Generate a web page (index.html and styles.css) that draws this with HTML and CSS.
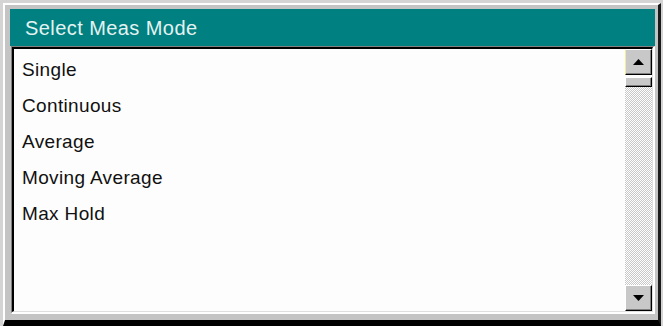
FILE: index.html
```html
<!DOCTYPE html>
<html>
<head>
<meta charset="utf-8">
<link rel="stylesheet" href="styles.css">
</head>
<body>
<div class="window">
  <div class="header">Select Meas Mode</div>
  <div class="sunken">
    <div class="list">
      <ul class="items">
        <li>Single</li>
        <li>Continuous</li>
        <li>Average</li>
        <li>Moving Average</li>
        <li>Max Hold</li>
      </ul>
      <div class="scroll">
        <div class="btn btn-up">
          <svg width="11" height="6" viewBox="0 0 11 6"><polygon points="5.5,0 11,6 0,6" fill="#000"/></svg>
        </div>
        <div class="thumb"></div>
        <div class="track"></div>
        <div class="btn btn-down">
          <svg width="11" height="6" viewBox="0 0 11 6"><polygon points="0,0 11,0 5.5,6" fill="#000"/></svg>
        </div>
      </div>
    </div>
  </div>
</div>
</body>
</html>
```
FILE: styles.css
```css
html, body {
  margin: 0;
  padding: 0;
}
body {
  background: #d4d4d4;
  width: 663px;
  height: 326px;
  overflow: hidden;
  font-family: "Liberation Sans", Arial, sans-serif;
}
.window {
  margin: 3px 2px 0 3px;
  border-top: 2px solid #ffffff;
  border-left: 2px solid #ffffff;
  border-right: 3px solid #1a1a1a;
  border-bottom: 6px solid #000000;
  background: #c4c4c4;
  padding: 4px 3px 6px 6px;
}
.header {
  height: 35px;
  padding: 2px 0 0 15px;
  line-height: 35px;
  background: #008080;
  color: #e4f2f2;
  font-size: 20px;
  letter-spacing: 0.43px;
  margin-left: -1px;
}
.sunken {
  border-top: 1px solid #808080;
  border-left: 1px solid #808080;
  border-right: 2px solid #ffffff;
  border-bottom: 2px solid #ffffff;
}
.list {
  display: flex;
  height: 262px;
  background: #fdfdfd;
  border-top: 2px solid #000000;
  border-left: 2px solid #000000;
  border-right: 1px solid #dfdfdf;
  border-bottom: 1px solid #dfdfdf;
}
.items {
  flex: 1;
  list-style: none;
  margin: 0;
  padding: 3px 0 0 8px;
  font-size: 19px;
  letter-spacing: 0.35px;
  line-height: 36px;
  color: #111111;
}
.scroll {
  width: 27px;
  display: flex;
  flex-direction: column;
}
.btn {
  height: 24px;
  flex: none;
  background: #c8c8c8;
  border-top: 1px solid #ffffff;
  border-left: 1px solid #ffffff;
  border-right: 1px solid #000000;
  border-bottom: 1px solid #000000;
  box-shadow: inset -1px -1px 0 #808080;
  display: flex;
  align-items: center;
  justify-content: center;
}
.btn-up {
  border-left-color: #f2ee9a;
}
.thumb {
  flex: none;
  height: 8px;
  margin-top: 2px;
  background: #c8c8c8;
  border-top: 1px solid #ffffff;
  border-left: 1px solid #ffffff;
  border-right: 1px solid #000000;
  border-bottom: 1px solid #000000;
  box-shadow: inset -1px -1px 0 #808080;
}
.track {
  flex: 1;
  background: repeating-conic-gradient(#c8c8c8 0 25%, #ffffff 0 50%) 0 0 / 2px 2px;
}
```
